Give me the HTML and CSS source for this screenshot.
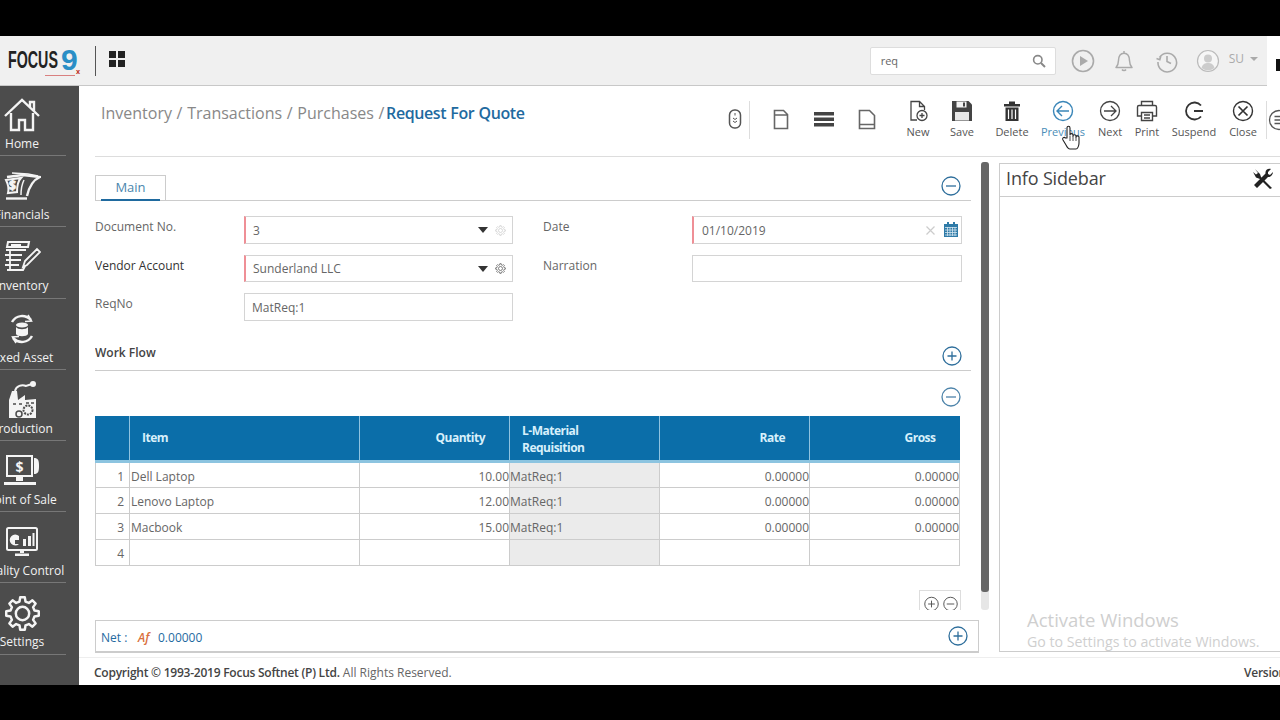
FILE: index.html
```html
<!DOCTYPE html>
<html lang="en">
<head>
    <meta charset="UTF-8">
    <meta name="viewport" content="width=device-width, initial-scale=1.0">
    <title>Request For Quote</title>
    <link rel="stylesheet" href="styles.css">
</head>
<body>
    <svg class="defs" xmlns="http://www.w3.org/2000/svg">
        <symbol id="gear" viewBox="-18 -18 36 36">
            <polygon points="11.64,2.9 15.84,2.23 15.84,-2.23 11.64,-2.9 10.29,-6.18 12.78,-9.63 9.63,-12.78 6.18,-10.29 2.9,-11.64 2.23,-15.84 -2.23,-15.84 -2.9,-11.64 -6.18,-10.29 -9.63,-12.78 -12.78,-9.63 -10.29,-6.18 -11.64,-2.9 -15.84,-2.23 -15.84,2.23 -11.64,2.9 -10.29,6.18 -12.78,9.63 -9.63,12.78 -6.18,10.29 -2.9,11.64 -2.23,15.84 2.23,15.84 2.9,11.64 6.18,10.29 9.63,12.78 12.78,9.63 10.29,6.18" fill="none" stroke="currentColor" stroke-width="2.4" stroke-linejoin="round"/>
            <circle r="6.5" fill="none" stroke="currentColor" stroke-width="2.4"/>
        </symbol>
        <symbol id="circle-plus" viewBox="0 0 20 20">
            <circle cx="10" cy="10" r="9" fill="none" stroke="currentColor" stroke-width="1.3"/>
            <path d="M5.5 10h9M10 5.5v9" fill="none" stroke="currentColor" stroke-width="1.3"/>
        </symbol>
        <symbol id="circle-minus" viewBox="0 0 20 20">
            <circle cx="10" cy="10" r="9" fill="none" stroke="currentColor" stroke-width="1.3"/>
            <path d="M5 10h10" fill="none" stroke="currentColor" stroke-width="1.3"/>
        </symbol>
    </svg>

    <div class="app">
        <header class="topbar">
            <div class="logo">
                <span class="logo-word">FOCUS</span>
                <span class="logo-nine">9</span>
                <span class="logo-x">x</span>
                <span class="logo-tag"></span>
            </div>
            <div class="topbar-divider"></div>
            <div class="apps-icon"><i></i><i></i><i></i><i></i></div>
            <div class="search">
                <span>req</span>
                <svg width="14" height="14" viewBox="0 0 14 14"><circle cx="5.8" cy="5.8" r="4.2" fill="none" stroke="#888" stroke-width="1.6"/><path d="M9 9l4 4" stroke="#888" stroke-width="2"/></svg>
            </div>
            <svg class="top-icon" width="24" height="24" viewBox="0 0 24 24"><circle cx="12" cy="12" r="10.5" fill="none" stroke="#aaa" stroke-width="1.6"/><path d="M9 7l8 5-8 5z" fill="#aaa"/></svg>
            <svg class="top-icon" width="24" height="24" viewBox="0 0 24 24"><path d="M4 18.5c2-2 2.4-3.5 2.5-7C6.7 7 9 4.300 12 4.300s5.300 2.700 5.500 7.200c.1 3.500.5 5 2.500 7zM10 20.500c.8 1.300 3.200 1.300 4 0M12 2v2.300" fill="none" stroke="#aaa" stroke-width="1.5" stroke-linejoin="round"/></svg>
            <svg class="top-icon history" width="24" height="24" viewBox="0 0 24 24"><path d="M4.500 8.500A9.300 9.300 0 1 1 3 13M1.500 9.500l3.300 1.200 1-3.400M12 7v5.500l4 2" fill="none" stroke="#aaa" stroke-width="1.6"/></svg>
            <svg class="avatar" width="24" height="24" viewBox="0 0 24 24"><circle cx="12" cy="12" r="10.500" fill="#f6f6f6" stroke="#bbb" stroke-width="1.200"/><circle cx="12" cy="9.500" r="4" fill="#ccc"/><path d="M5.500 19c1-4 3.500-5 6.500-5s5.500 1 6.500 5a10 10 0 0 1-13 0z" fill="#ccc"/></svg>
            <span class="user">SU</span>
            <span class="user-caret"></span>
            <div class="top-end"><span></span></div>
        </header>

        <div class="main">
            <nav class="sidebar">
                <a class="nav-item">
                    <span class="nav-icon">
                        <svg width="36" height="34" viewBox="0 0 36 34" fill="none" stroke="#f4f4f4" stroke-width="2.400"><path d="M1 18L18 2l17 16M26 9V4h4v9M7 15v17h8V22h6v10h8V15"/></svg>
                    </span>
                    <span>Home</span>
                </a>
                <a class="nav-item">
                    <span class="nav-icon">
                        <svg width="38" height="28" viewBox="0 0 38 28" fill="none" stroke="#f4f4f4"><path d="M4 5l16-2 17 2c-7 3-11 10-13 19" stroke-width="2.400"/><path d="M9 1l16 1 10 2" stroke-width="1.500"/><path d="M3 8l15-2c-3 3-4 9-4 14l-9 1c1-4 0-9-2-13z" stroke-width="2"/><path d="M3 26.500h21" stroke-width="2.400"/><path d="M21 8c-2 4-3 9-3 15" stroke-width="1.500"/><text x="6" y="18" class="icon-dollar">$</text></svg>
                    </span>
                    <span>Financials</span>
                </a>
                <a class="nav-item">
                    <span class="nav-icon">
                        <svg width="38" height="32" viewBox="0 0 38 32" fill="none" stroke="#f4f4f4" stroke-width="2"><path d="M5 1h21l-1 5H4zM3 9h20M2 14h17M3 19h15M2 24h14M4 29h16l2-4"/><path d="M8 4h10M7 9v20M22 20L34 8l3 3-13 13-4 2z" stroke-width="1.800"/></svg>
                    </span>
                    <span>Inventory</span>
                </a>
                <a class="nav-item">
                    <span class="nav-icon">
                        <svg width="26" height="30" viewBox="0 0 26 30" fill="none" stroke="#f4f4f4" stroke-width="2.500"><path d="M22 6C16 0 7 1 3 8M4 24c6 6 15 5 19-2"/><path d="M19 1l3.500 6-6.500.5M7 29l-3.500-6 6.500-.5" stroke-width="1.600"/><ellipse cx="13" cy="11" rx="6" ry="2.500" fill="#f4f4f4" stroke="none"/><path d="M7 13v7c1 3 11 3 12 0v-7c-2 3-10 3-12 0z" fill="#f4f4f4" stroke="none"/></svg>
                    </span>
                    <span>Fixed Asset</span>
                </a>
                <a class="nav-item">
                    <span class="nav-icon">
                        <svg width="30" height="38" viewBox="0 0 30 38" fill="none"><path d="M2 37V19l3-9h5l1 9 7-5v5l11-1v19z" fill="#f4f4f4"/><path d="M8 10c1-5 7-7 11-5l6-2" stroke="#f4f4f4" stroke-width="2"/><circle cx="26" cy="3" r="3" fill="#f4f4f4"/><circle cx="21" cy="29" r="4.500" fill="none" stroke="#4c4c4c" stroke-width="2" stroke-dasharray="2 1"/><circle cx="12" cy="33" r="3" fill="none" stroke="#4c4c4c" stroke-width="1.500"/><path d="M6 23h3M12 23h3M19 22h3M24 22h3" stroke="#4c4c4c" stroke-width="1.500"/></svg>
                    </span>
                    <span>Production</span>
                </a>
                <a class="nav-item">
                    <span class="nav-icon">
                        <svg width="38" height="32" viewBox="0 0 38 32" fill="none"><rect x="4" y="1" width="25" height="20" fill="none" stroke="#f4f4f4" stroke-width="2"/><path d="M31 3c4 0 5 2 5 8s-1 8-5 8z" fill="#f4f4f4"/><path d="M13 21h7v5h-7zM1 27h32v3H1z" fill="#f4f4f4"/><text x="16.500" y="16.500" class="icon-dollar pos" text-anchor="middle">$</text></svg>
                    </span>
                    <span>Point of Sale</span>
                </a>
                <a class="nav-item">
                    <span class="nav-icon">
                        <svg width="34" height="30" viewBox="0 0 34 30" fill="none"><rect x="2" y="1" width="30" height="22" rx="1.500" stroke="#f4f4f4" stroke-width="2"/><path d="M14 9a5.500 5.500 0 1 0 0 8H10v-4h4z" fill="#f4f4f4"/><path d="M18 12h3v7h-3zM23 9h3v10h-3zM27.500 6h2v13h-2z" fill="#f4f4f4"/><path d="M15 23h4v3h-4zM10 26.500h14V29H10z" fill="#f4f4f4"/></svg>
                    </span>
                    <span>Quality Control</span>
                </a>
                <a class="nav-item">
                    <span class="nav-icon">
                        <svg class="nav-gear" width="37" height="37"><use href="#gear"/></svg>
                    </span>
                    <span>Settings</span>
                </a>
            </nav>

            <div class="content">
                <div class="page-head">
                    <div class="crumbs">Inventory /&nbsp;Transactions /&nbsp;Purchases / <b>Request For Quote</b></div>
                    <svg class="mouse-icon" width="14" height="20" viewBox="0 0 14 20" fill="none"><rect x="1.500" y="1" width="11" height="18" rx="5" stroke="#555" stroke-width="1.500"/><path d="M7 4v2.500M5 9l2 1.500L9 9M5 12l2 1.500L9 12" stroke="#555"/></svg>
                    <div class="head-divider"></div>
                    <svg class="view-icon" width="24" height="24" viewBox="0 0 24 24" fill="none" stroke="#666" stroke-width="1.600"><path d="M5.500 3.500h9l4 4v14h-13zM5.500 8h13"/></svg>
                    <svg class="view-icon" width="24" height="24" viewBox="0 0 24 24" fill="#444"><path d="M2 5h20v3.500H2zM2 10.500h20V14H2zM2 16h20v3.500H2z"/></svg>
                    <svg class="view-icon" width="24" height="24" viewBox="0 0 24 24" fill="none" stroke="#666" stroke-width="1.600"><path d="M4.500 3.500h10l5 5v13h-15zM4.500 17.500h15"/></svg>
                    <div class="tools">
                        <div class="tool">
                            <svg width="22" height="22" viewBox="0 0 22 22" fill="none" stroke="#444" stroke-width="1.300"><path d="M10 20H4V1.500h8.500l5 5V10M12.500 1.500v5h5"/><circle cx="15" cy="15.500" r="5"/><path d="M12.500 15.500h5M15 13v5"/></svg>
                            <span>New</span>
                        </div>
                        <div class="tool">
                            <svg width="22" height="22" viewBox="0 0 22 22"><path d="M1 1h16.500L21 4.500V21H1z" fill="#444"/><path d="M5.500 1.500h10v6h-10z" fill="#f4f4f4"/><path d="M4 12h14v8.500H4z" fill="#e8e8e8"/><path d="M12 2.500h2v4h-2z" fill="#444"/></svg>
                            <span>Save</span>
                        </div>
                        <div class="tool">
                            <svg width="22" height="22" viewBox="0 0 22 22"><path d="M3 4h16v2.500H3zM8 1.500h6V4H8zM4.500 7.500h13V21h-13z" fill="#333"/><path d="M7.500 9.500v9.500M11 9.500v9.500M14.500 9.500v9.500" stroke="#fff" stroke-width="1.200"/></svg>
                            <span>Delete</span>
                        </div>
                        <div class="tool active">
                            <svg width="22" height="22" viewBox="0 0 22 22" fill="none" stroke="#3a86b8" stroke-width="1.400"><circle cx="11" cy="11" r="9.500"/><path d="M17 11H5.500M10 6l-5 5 5 5"/></svg>
                            <span>Previous</span>
                        </div>
                        <div class="tool">
                            <svg width="22" height="22" viewBox="0 0 22 22" fill="none" stroke="#444" stroke-width="1.300"><circle cx="11" cy="11" r="9.500"/><path d="M5 11h11.500M12 6l5 5-5 5"/></svg>
                            <span>Next</span>
                        </div>
                        <div class="tool">
                            <svg width="22" height="22" viewBox="0 0 22 22" fill="none" stroke="#444" stroke-width="1.400"><path d="M5.500 6V1.500h11V6M5.500 16H1.500V7c0-1 .5-1.500 1.500-1.500h16c1 0 1.500.5 1.500 1.500v9h-4"/><path d="M5.500 12.500h11v8h-11zM8 15h6M8 18h6"/></svg>
                            <span>Print</span>
                        </div>
                        <div class="tool">
                            <svg width="22" height="22" viewBox="0 0 22 22" fill="none" stroke="#333" stroke-width="1.800"><path d="M18 5.500A8.500 8.500 0 1 0 18 16.500M11 11h9"/></svg>
                            <span>Suspend</span>
                        </div>
                        <div class="tool">
                            <svg width="22" height="22" viewBox="0 0 22 22" fill="none" stroke="#333" stroke-width="1.400"><circle cx="11" cy="11" r="9.500"/><path d="M6.500 6.500l9 9M15.500 6.500l-9 9" stroke-width="1.700"/></svg>
                            <span>Close</span>
                        </div>
                    </div>
                    <div class="head-divider last"></div>
                    <svg class="more-icon" width="22" height="22" viewBox="0 0 22 22" fill="none" stroke="#555" stroke-width="1.300"><circle cx="11" cy="11" r="9.500"/><path d="M6.500 7.500h9M6.500 11h9M6.500 14.500h9"/></svg>
                </div>

                <div class="workspace">
                    <div class="left-col">
                        <div class="form-area">
                            <div class="tab-row">
                                <div class="tab"><span>Main</span></div>
                                <svg class="round-btn" width="20" height="20"><use href="#circle-minus"/></svg>
                            </div>

                            <div class="form-grid">
                                <div class="field">
                                    <label>Document No.</label>
                                    <div class="input required">
                                        <span>3</span>
                                        <i class="caret"></i>
                                        <svg class="field-gear muted" width="11" height="11"><use href="#gear"/></svg>
                                    </div>
                                </div>
                                <div class="field">
                                    <label>Date</label>
                                    <div class="input required date">
                                        <span>01/10/2019</span>
                                        <svg class="clear" width="9" height="9" viewBox="0 0 9 9"><path d="M.5.500l8 8M8.500.500l-8 8" stroke="#ccc" stroke-width="1.200"/></svg>
                                        <svg class="calendar" width="14" height="15" viewBox="0 0 14 15"><path d="M0 2h14v13H0z" fill="#2f7ba8"/><path d="M3 0h2v3H3zM9 0h2v3H9z" fill="#2f7ba8"/><path d="M1 5.500h12M1 8h12M1 10.500h12M1 13h12M3.500 5v9M6 5v9M8.500 5v9M11 5v9" stroke="#d5e6f0" stroke-width=".8"/></svg>
                                    </div>
                                </div>
                                <div class="field">
                                    <label class="strong">Vendor Account</label>
                                    <div class="input required">
                                        <span>Sunderland LLC</span>
                                        <i class="caret"></i>
                                        <svg class="field-gear" width="11" height="11"><use href="#gear"/></svg>
                                    </div>
                                </div>
                                <div class="field">
                                    <label>Narration</label>
                                    <div class="input"></div>
                                </div>
                                <div class="field">
                                    <label>ReqNo</label>
                                    <div class="input"><span>MatReq:1</span></div>
                                </div>
                            </div>

                            <div class="workflow-row">
                                <span>Work Flow</span>
                                <svg class="round-btn" width="20" height="20"><use href="#circle-plus"/></svg>
                            </div>

                            <div class="grid-head">
                                <svg class="round-btn" width="20" height="20"><use href="#circle-minus"/></svg>
                            </div>

                            <table class="items">
                                <colgroup>
                                    <col class="c-no"><col class="c-item"><col class="c-num"><col class="c-num"><col class="c-num"><col class="c-num">
                                </colgroup>
                                <thead>
                                    <tr>
                                        <th></th>
                                        <th class="left">Item</th>
                                        <th>Quantity</th>
                                        <th class="left wrap">L-Material Requisition</th>
                                        <th>Rate</th>
                                        <th>Gross</th>
                                    </tr>
                                </thead>
                                <tbody>
                                    <tr><td class="no">1</td><td>Dell Laptop</td><td class="num">10.00</td><td class="ro">MatReq:1</td><td class="num">0.00000</td><td class="num">0.00000</td></tr>
                                    <tr><td class="no">2</td><td>Lenovo Laptop</td><td class="num">12.00</td><td class="ro">MatReq:1</td><td class="num">0.00000</td><td class="num">0.00000</td></tr>
                                    <tr><td class="no">3</td><td>Macbook</td><td class="num">15.00</td><td class="ro">MatReq:1</td><td class="num">0.00000</td><td class="num">0.00000</td></tr>
                                    <tr><td class="no">4</td><td></td><td></td><td class="ro"></td><td></td><td></td></tr>
                                </tbody>
                            </table>

                            <div class="row-btns">
                                <div>
                                    <svg width="16" height="16"><use href="#circle-plus"/></svg>
                                    <svg width="16" height="16"><use href="#circle-minus"/></svg>
                                </div>
                            </div>
                        </div>

                        <div class="net-bar">
                            <span class="net-label">Net :</span>
                            <span class="net-cur">Af</span>
                            <span class="net-val">0.00000</span>
                            <svg class="round-btn" width="20" height="20"><use href="#circle-plus"/></svg>
                        </div>
                    </div>

                    <div class="scrollbar"><div class="scroll-thumb"></div></div>

                    <aside class="info">
                        <div class="info-head">
                            <span>Info Sidebar</span>
                            <svg width="22" height="22" viewBox="0 0 22 22"><path d="M3 1l5 5 1 3 11 11-2 1L8 11 4 9.500 1 4l3 2.500L6 5z" fill="#222"/><path d="M21 4l-3 3-2-1 0-2 3-3c-3-1-6 1-5.500 4.500L2 17l3 3L16 9c2 .5 5-2 5-5z" fill="#222"/></svg>
                        </div>
                        <div class="activate">
                            <div class="activate-title">Activate Windows</div>
                            <div class="activate-sub">Go to Settings to activate Windows.</div>
                        </div>
                    </aside>
                </div>

                <footer class="footer">
                    <span><b>Copyright © 1993-2019 Focus Softnet (P) Ltd.</b> All Rights Reserved.</span>
                    <b class="version">Version</b>
                </footer>
            </div>
        </div>

        <svg class="pointer" width="20" height="26" viewBox="0 0 20 26"><path d="M5 13V3c0-2.400 3-2.400 3 0v7c0-1.800 3-1.800 3 0v1c0-1.600 3-1.600 3 0v1c0-1.500 3-1.500 3 0v6c0 3-1.500 6-3 6H8c-2 0-3-2-4-4l-3-5c-1-2 1-3.500 2.500-2z" fill="#fff" stroke="#222" stroke-width="1.100" stroke-linejoin="round"/><path d="M8 11v5M11 11v5M14 12v4" stroke="#222" stroke-width=".8"/></svg>
    </div>
</body>
</html>
```

FILE: styles.css
```css
* {
    box-sizing: border-box;
}

body {
    margin: 0;
    background-color: #000;
    font-family: "Open Sans", Arial, sans-serif;
    font-size: 12px;
    color: #666;
    overflow: hidden;
}

.defs {
    display: none;
}

.app {
    position: relative;
    display: flex;
    flex-direction: column;
    width: 1280px;
    height: 649px;
    margin-top: 36px;
    background-color: #fff;
    overflow: hidden;
}

/* top bar */
.topbar {
    display: flex;
    align-items: center;
    flex: none;
    height: 50px;
    background-color: #f0f0f0;
    border-bottom: 1px solid #c8c8c8;
}

.logo {
    position: relative;
    width: 95px;
    height: 50px;
    flex: none;
}

.logo-word {
    position: absolute;
    left: 8px;
    top: 11px;
    font-family: "Liberation Sans", Arial, sans-serif;
    font-size: 23px;
    font-weight: 700;
    color: #222;
    transform: scaleX(0.62);
    transform-origin: left center;
}

.logo-nine {
    position: absolute;
    left: 61px;
    top: 7px;
    font-family: "Liberation Sans", Arial, sans-serif;
    font-size: 30px;
    line-height: 34px;
    font-weight: 700;
    color: #2a8ec6;
}

.logo-x {
    position: absolute;
    left: 76px;
    top: 31px;
    font-size: 7px;
    font-weight: 700;
    color: #c0392b;
}

.logo-tag {
    position: absolute;
    left: 45px;
    top: 39px;
    width: 30px;
    height: 1px;
    background-color: #d98080;
}

.topbar-divider {
    width: 1px;
    height: 30px;
    background-color: #555;
    flex: none;
}

.apps-icon {
    display: grid;
    grid-template-columns: 7px 7px;
    gap: 2px;
    margin-left: 13px;
    margin-bottom: 3px;
}

.apps-icon i {
    height: 7px;
    background-color: #222;
}

.search {
    display: flex;
    align-items: center;
    justify-content: space-between;
    width: 186px;
    height: 28px;
    margin-left: auto;
    padding: 0 9px 0 10px;
    background-color: #fff;
    border: 1px solid #ddd;
    border-radius: 2px;
    font-size: 11px;
    color: #666;
}

.top-icon {
    margin-left: 15px;
    flex: none;
}

.top-icon + .top-icon {
    margin-left: 17px;
}

.top-icon.history {
    margin-left: 19px;
}

.avatar {
    margin-left: 17px;
    flex: none;
}

.user {
    margin-left: 9px;
    margin-bottom: 4px;
    font-size: 12px;
    color: #aaa;
}

.user-caret {
    margin-left: 6px;
    margin-bottom: 3px;
    border-top: 4px solid #aaa;
    border-left: 4px solid transparent;
    border-right: 4px solid transparent;
}

.top-end {
    display: flex;
    align-items: center;
    width: 13px;
    height: 50px;
    margin-left: 9px;
    padding-left: 9px;
    background-color: #fff;
    flex: none;
}

.top-end span {
    width: 4px;
    height: 12px;
    margin-top: 8px;
    background-color: #111;
}

.main {
    display: flex;
    flex: 1;
    min-height: 0;
}

/* left nav */
.sidebar {
    width: 79px;
    flex: none;
    background-color: #4c4c4c;
    overflow: hidden;
}

.nav-item {
    display: flex;
    flex-direction: column;
    align-items: center;
    width: 88px;
    height: 71.2px;
    margin-left: -22px;
    padding-top: 11px;
    border-bottom: 1px solid #777;
    font-size: 12px;
    line-height: 19px;
    color: #f2f2f2;
    white-space: nowrap;
}

.nav-item:first-child {
    margin-top: -1px;
}

.nav-icon {
    display: flex;
    align-items: center;
    justify-content: center;
    height: 38px;
}

.nav-gear {
    color: #f4f4f4;
}

.icon-dollar {
    font-family: "Open Sans", Arial, sans-serif;
    font-size: 12px;
    font-weight: 700;
    fill: #f4f4f4;
}

.icon-dollar.pos {
    font-size: 14px;
}

/* page content */
.content {
    display: flex;
    flex-direction: column;
    flex: 1;
    min-width: 0;
}

.page-head {
    display: flex;
    align-items: flex-start;
    flex: none;
    height: 71px;
    margin-left: 16px;
    padding-left: 6px;
    border-bottom: 1px solid #ddd;
    white-space: nowrap;
}

.crumbs {
    width: 626px;
    flex: none;
    padding-top: 16px;
    font-size: 16px;
    line-height: 22px;
    word-spacing: 0.5px;
    color: #888;
}

.crumbs b {
    margin-left: -3px;
    font-weight: 600;
    letter-spacing: -0.42px;
    color: #1f6a9f;
}

.mouse-icon {
    flex: none;
    margin-top: 23px;
    margin-left: 1px;
}

.head-divider {
    width: 1px;
    height: 38px;
    margin: 15px 0 0 7px;
    background-color: #ddd;
    flex: none;
}

.head-divider.last {
    margin-left: 8px;
}

.view-icon {
    flex: none;
    margin-top: 21px;
    margin-left: 19px;
}

.view-icon + .view-icon {
    margin-left: 19px;
}

.tools {
    display: grid;
    grid-template-columns: 44px 44px 56px 46px 48px 26px 68px 30px;
    margin-left: 17px;
    flex: none;
}

.tool {
    display: flex;
    flex-direction: column;
    align-items: center;
    padding-top: 14px;
    font-size: 11px;
    line-height: 15px;
    color: #555;
}

.tool svg {
    margin-bottom: 2px;
}

.tool.active {
    color: #4a8db8;
}

.more-icon {
    flex: none;
    margin: 23px 0 0 1px;
}

.workspace {
    display: flex;
    flex: 1;
    min-height: 0;
    padding-left: 16px;
}

.left-col {
    width: 884px;
    flex: none;
}

.form-area {
    width: 876px;
    height: 453px;
    overflow: hidden;
}

.tab-row {
    display: flex;
    align-items: center;
    justify-content: space-between;
    height: 44px;
    padding: 18px 10px 0 0;
    border-bottom: 1px solid #ccc;
}

.tab {
    width: 71px;
    height: 26px;
    margin-bottom: -1px;
    padding: 0 5px;
    border: 1px solid #ccc;
    border-bottom: 0;
    text-align: center;
}

.tab span {
    display: block;
    height: 25px;
    font-size: 13px;
    line-height: 23px;
    color: #4a86ad;
    border-bottom: 2px solid #1f6a9f;
}

.round-btn {
    color: #2f6f9c;
    flex: none;
}

.tab-row .round-btn {
    margin-top: -4px;
}

.form-grid {
    display: grid;
    grid-template-columns: 418px 419px;
    column-gap: 30px;
    row-gap: 11px;
    margin-top: 15px;
}

.field {
    display: flex;
}

.field label {
    width: 149px;
    flex: none;
    padding-top: 3px;
    line-height: 16px;
}

.field label.strong {
    color: #333;
}

.input {
    display: flex;
    align-items: center;
    flex: 1;
    height: 27.5px;
    padding: 1px 8px 0 7px;
    border: 1px solid #d4d4d4;
    line-height: 16px;
}

.input span {
    flex: 1;
    padding-top: 1px;
}

.input.date {
    padding-left: 8px;
}

.input.required {
    border-left: 2px solid #ef8f96;
}

.caret {
    margin-right: 7px;
    border-top: 6px solid #333;
    border-left: 5px solid transparent;
    border-right: 5px solid transparent;
}

.field-gear {
    color: #555;
    flex: none;
    margin-right: -2px;
}

.field-gear.muted {
    color: #ccc;
}

.clear {
    margin-right: 9px;
}

.calendar {
    margin-right: -5px;
    margin-bottom: 2px;
}

.workflow-row {
    display: flex;
    justify-content: space-between;
    height: 50px;
    padding: 23px 9px 0 0;
    border-bottom: 1px solid #ccc;
    font-weight: 600;
    color: #444;
}

.workflow-row span {
    line-height: 18px;
}

.workflow-row .round-btn {
    margin-top: 2px;
}

.grid-head {
    display: flex;
    justify-content: flex-end;
    height: 45px;
    padding: 16px 10px 0 0;
}

.grid-head .round-btn {
    opacity: 0.85;
}

.items {
    width: 864px;
    table-layout: fixed;
    border-collapse: collapse;
}

.c-no {
    width: 34px;
}

.c-item {
    width: 230px;
}

.c-num {
    width: 150px;
}

.items th {
    height: 46px;
    padding: 0 24px 0 0;
    background-color: #0b6ea9;
    border-left: 1px solid #8fc3e0;
    border-bottom: 3px solid #8cc4e0;
    font-size: 12px;
    font-weight: 700;
    line-height: 17px;
    letter-spacing: -0.5px;
    color: #d8f0fb;
    text-align: right;
}

.items th:first-child {
    border-left-color: #0b6ea9;
}

.items th.left {
    padding: 0 30px 0 12px;
    text-align: left;
}

.items th.wrap {
    padding-top: 2px;
}

.items td {
    height: 26px;
    padding: 2px 0 0 1px;
    border: 1px solid #ccc;
    white-space: nowrap;
}

.items td.no {
    padding-right: 5px;
    text-align: right;
}

.items td.num {
    padding-left: 0;
    padding-right: 0;
    text-align: right;
}

.items td.ro {
    padding-left: 0;
    background-color: #ebebeb;
}

.row-btns {
    display: flex;
    justify-content: flex-end;
    width: 866px;
    margin-top: 24px;
}

.row-btns div {
    display: flex;
    gap: 4px;
    width: 42px;
    height: 24px;
    padding: 5px 2px 0 4px;
    border: 1px solid #ddd;
    color: #555;
}

.net-bar {
    display: flex;
    align-items: center;
    height: 33px;
    margin-top: 10px;
    padding: 0 10px 0 5px;
    border: 1px solid #ccc;
    border-bottom-width: 2px;
}

.net-label,
.net-cur,
.net-val {
    padding-top: 2px;
}

.net-label {
    width: 37px;
    color: #1f6a9f;
}

.net-cur {
    width: 20px;
    font-style: italic;
    font-weight: 600;
    color: #d9703c;
}

.net-val {
    flex: 1;
    color: #1f6a9f;
}

.scrollbar {
    position: relative;
    width: 8px;
    height: 448px;
    margin: 5px 0 0 2px;
    background-color: #e6e6e6;
    border-radius: 3px;
    flex: none;
}

.scroll-thumb {
    height: 430px;
    background-color: #666;
    border-radius: 3px;
}

.info {
    position: relative;
    flex: 1;
    height: 489px;
    margin: 6px 0 0 10px;
    border: 1px solid #ccc;
    border-right: 0;
}

.info-head {
    display: flex;
    align-items: center;
    justify-content: space-between;
    height: 33px;
    padding: 0 6px 4px 6px;
    border-bottom: 1px solid #ccc;
    font-size: 18px;
    letter-spacing: -0.15px;
    color: #444;
}

.info-head svg {
    margin-top: 2px;
}

.activate {
    position: absolute;
    left: 27px;
    top: 444px;
    white-space: nowrap;
    color: #cfcfcf;
}

.activate-title {
    font-size: 18.5px;
    line-height: 24px;
}

.activate-sub {
    font-size: 14.2px;
    line-height: 20px;
}

.footer {
    display: flex;
    align-items: center;
    justify-content: space-between;
    flex: none;
    height: 28px;
    padding: 1px 0 0 15px;
    border-top: 1px solid #eee;
    white-space: nowrap;
}

.footer b {
    font-weight: 600;
    letter-spacing: -0.24px;
    color: #444;
}

.version {
    margin-right: -6px;
}

.pointer {
    position: absolute;
    left: 1062px;
    top: 89px;
}
```
